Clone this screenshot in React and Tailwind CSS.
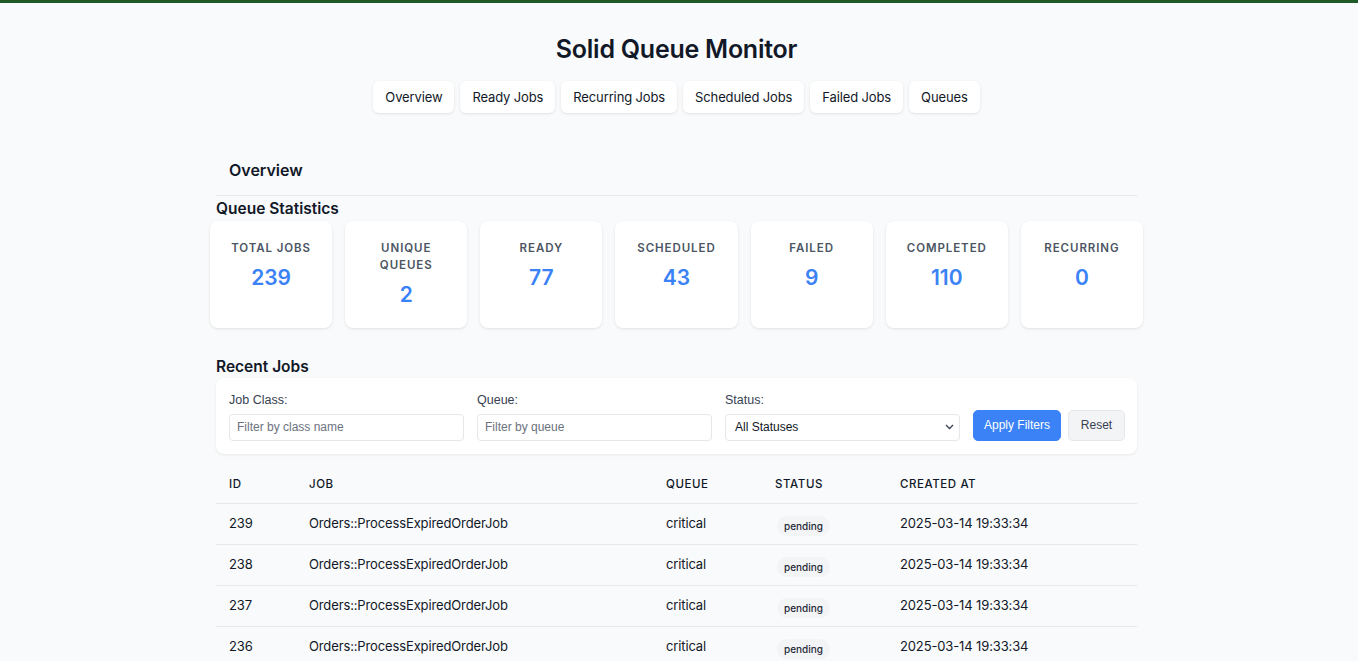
import React from 'react';

const NAV_ITEMS = ['Overview', 'Ready Jobs', 'Recurring Jobs', 'Scheduled Jobs', 'Failed Jobs', 'Queues'];

const STATS = [
  { label: 'Total Jobs', value: 239 },
  { label: 'Unique Queues', value: 2 },
  { label: 'Ready', value: 77 },
  { label: 'Scheduled', value: 43 },
  { label: 'Failed', value: 9 },
  { label: 'Completed', value: 110 },
  { label: 'Recurring', value: 0 },
];

const JOBS = [239, 238, 237, 236].map((id) => ({
  id,
  className: 'Orders::ProcessExpiredOrderJob',
  queue: 'critical',
  status: 'pending',
  createdAt: '2025-03-14 19:33:34',
}));

const formFont = { fontFamily: '"Liberation Sans", Arial, sans-serif' };

function StatCard({ label, value }) {
  return (
    <div className="bg-white rounded-lg shadow-[0_1px_3px_rgba(0,0,0,0.1)] h-[107px] pt-[19px] px-[16px] flex flex-col items-center text-center">
      <div className="text-[11.5px] leading-[17px] font-semibold uppercase tracking-[0.08em] text-[#4b5563]">
        {label}
      </div>
      <div className="mt-[8px] text-[21px] leading-[26px] font-semibold text-[#3b82f6]">{value}</div>
    </div>
  );
}

function FilterField({ label, children }) {
  return (
    <div className="w-[235px] shrink-0">
      <label className="block text-[12.5px] leading-[16px] text-[#374151] mb-[5px]" style={formFont}>
        {label}
      </label>
      {children}
    </div>
  );
}

export default function App() {
  return (
    <div
      className="min-h-screen bg-[#f9fafb] text-[#111827] border-t-[3px] border-[#1f5a28] pr-[5px]"
      style={{ fontFamily: 'Inter, "Noto Sans", sans-serif' }}
    >
      <header className="pt-[31px] flex flex-col items-center">
        <h1 className="text-[25px] leading-[30px] font-semibold tracking-[-0.01em]">Solid Queue Monitor</h1>
        <nav className="mt-[17px] flex gap-[6px]">
          {NAV_ITEMS.map((item) => (
            <a
              key={item}
              href="#"
              className="h-[32px] px-[12px] pt-[1px] flex items-center bg-white rounded-md shadow-[0_1px_3px_rgba(0,0,0,0.1)] text-[13px] tracking-[-0.01em] text-[#111827]"
            >
              {item}
            </a>
          ))}
        </nav>
      </header>

      <main className="w-[921px] mx-auto mt-[45px]">
        <div className="px-[13px] pb-[13px] border-b border-[#e5e7eb]">
          <h2 className="text-[16px] leading-[24px] font-semibold">Overview</h2>
        </div>

        <h3 className="mt-[3px] text-[15.5px] leading-[20px] font-semibold">Queue Statistics</h3>
        <div className="mt-[2px] -mx-[6px] grid grid-cols-7 gap-[13px]">
          {STATS.map((s) => (
            <StatCard key={s.label} {...s} />
          ))}
        </div>

        <h3 className="mt-[29px] text-[15.5px] leading-[20px] font-semibold">Recent Jobs</h3>
        <div className="mt-[1px] bg-white rounded-lg shadow-[0_1px_3px_rgba(0,0,0,0.08)] pl-[13px] pr-[12px] pt-[14px] pb-[13px] flex items-end gap-[13px]">
          <FilterField label="Job Class:">
            <input
              type="text"
              placeholder="Filter by class name"
              className="w-full h-[27px] px-[7px] border border-[#e5e7eb] rounded text-[12px] placeholder-[#6b7280] bg-white"
              style={formFont}
            />
          </FilterField>
          <FilterField label="Queue:">
            <input
              type="text"
              placeholder="Filter by queue"
              className="w-full h-[27px] px-[7px] border border-[#e5e7eb] rounded text-[12px] placeholder-[#6b7280] bg-white"
              style={formFont}
            />
          </FilterField>
          <FilterField label="Status:">
            <div className="relative">
              <select
                className="appearance-none w-full h-[27px] pl-[9px] pr-6 border border-[#e5e7eb] rounded text-[12px] bg-white text-[#111827]"
                style={formFont}
                defaultValue="all"
              >
                <option value="all">All Statuses</option>
                <option value="pending">Pending</option>
                <option value="failed">Failed</option>
              </select>
              <svg
                className="absolute right-[6px] top-[11px] pointer-events-none"
                width="9"
                height="6"
                viewBox="0 0 9 6"
                fill="none"
                stroke="#374151"
                strokeWidth="1.3"
              >
                <path d="M1 1l3.5 3.5L8 1" />
              </svg>
            </div>
          </FilterField>
          <div className="flex gap-[7px] shrink-0">
            <button
              className="h-[31px] w-[88px] whitespace-nowrap bg-[#3b82f6] text-white rounded-[5px] text-[12px] border border-[#3b82f6]"
              style={formFont}
            >
              Apply Filters
            </button>
            <button
              className="h-[31px] w-[57px] bg-[#f3f4f6] text-[#374151] rounded-[5px] text-[12px] border border-[#e5e7eb]"
              style={formFont}
            >
              Reset
            </button>
          </div>
        </div>

        <table className="mt-[12px] w-full text-left border-collapse">
          <thead>
            <tr className="border-b border-[#e5e7eb]">
              <th className="w-[80px] pl-[13px] h-[38px] text-[11.5px] font-medium uppercase tracking-[0.05em]">ID</th>
              <th className="w-[357px] pl-[13px] text-[11.5px] font-medium uppercase tracking-[0.05em]">Job</th>
              <th className="w-[109px] pl-[13px] text-[11.5px] font-medium uppercase tracking-[0.05em]">Queue</th>
              <th className="w-[125px] pl-[13px] text-[11.5px] font-medium uppercase tracking-[0.05em]">Status</th>
              <th className="pl-[13px] text-[11.5px] font-medium uppercase tracking-[0.05em]">Created At</th>
            </tr>
          </thead>
          <tbody>
            {JOBS.map((job) => (
              <tr key={job.id} className="border-b border-[#e5e7eb]">
                <td className="pl-[13px] h-[41px] text-[13px] tracking-[-0.01em]">{job.id}</td>
                <td className="pl-[13px] text-[13px] tracking-[-0.01em]">{job.className}</td>
                <td className="pl-[13px] text-[13px] tracking-[-0.01em]">{job.queue}</td>
                <td className="pl-[13px] align-middle">
                  <span className="inline-block align-middle ml-[2px] px-[7px] py-[3px] rounded-full bg-[#f3f4f6] text-[10px] leading-[14px] font-medium text-[#1f2937]">
                    {job.status}
                  </span>
                </td>
                <td className="pl-[13px] text-[13px] tracking-[-0.01em]">{job.createdAt}</td>
              </tr>
            ))}
          </tbody>
        </table>
      </main>
    </div>
  );
}
